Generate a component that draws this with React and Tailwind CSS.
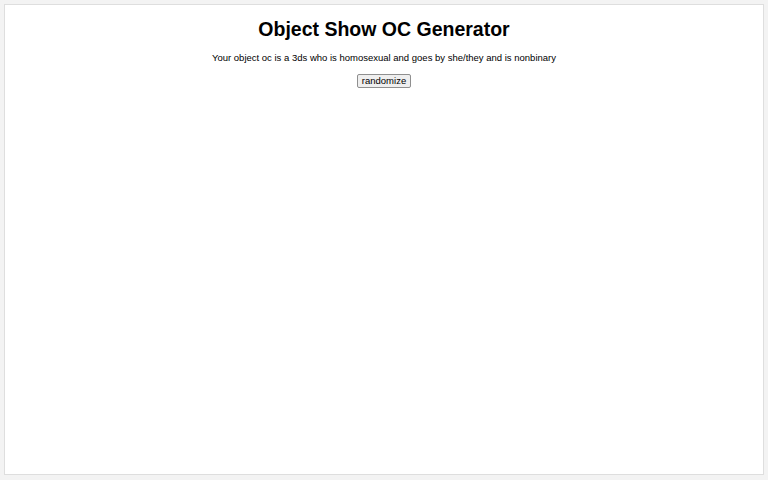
export default function App() {
  return (
    <div className="min-h-[480px] bg-[#f3f3f3] p-[4px] font-['Liberation_Sans',Arial,sans-serif] text-black">
      <div className="flex h-[471px] flex-col items-center border border-[#dedede] bg-white">
        <h1 className="mt-[12px] text-[19.5px] font-bold leading-[24px]">Object Show OC Generator</h1>
        <p className="mt-[11px] text-[9.5px] leading-[12px]">
          Your object oc is a 3ds who is homosexual and goes by she/they and is nonbinary
        </p>
        <button className="mt-[10px] rounded-[2px] border border-[#8f8f8f] bg-[#efefef] px-[4px] text-[9.5px] leading-[12px]">
          randomize
        </button>
      </div>
    </div>
  );
}
